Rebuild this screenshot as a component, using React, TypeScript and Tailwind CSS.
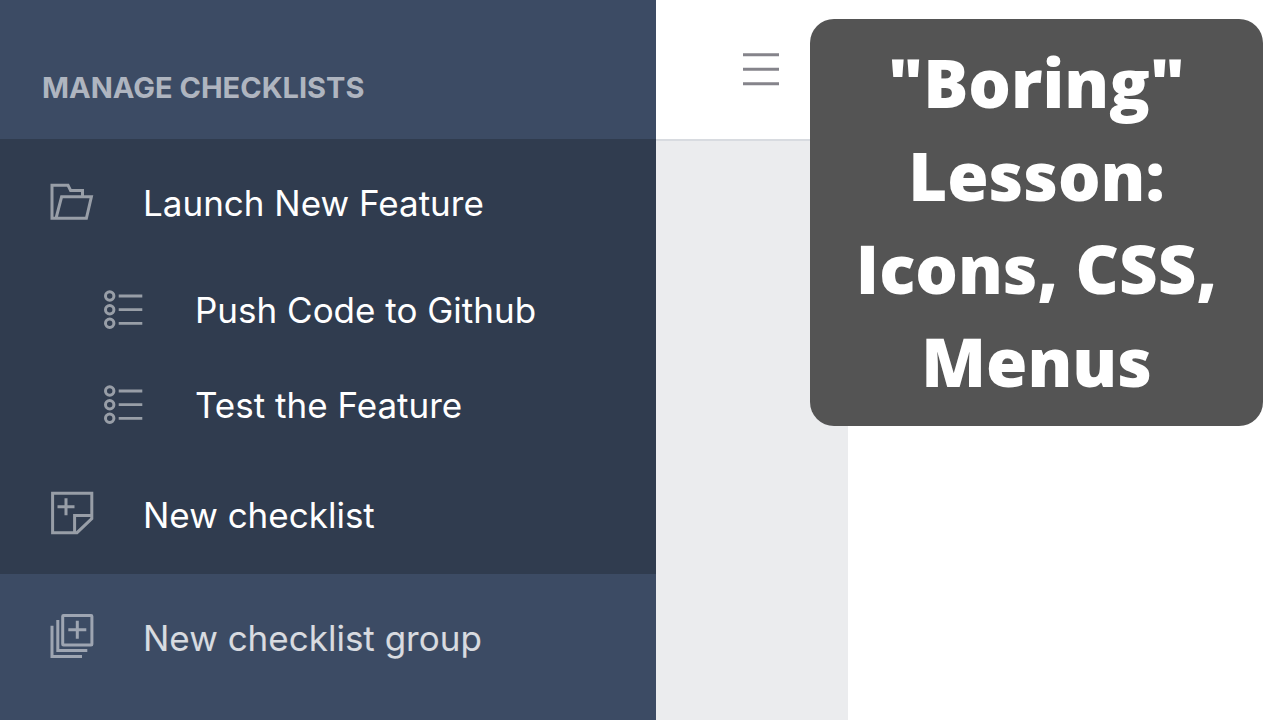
import React from 'react';
import { clsx } from 'clsx';

interface IconProps {
    className?: string;
    children: React.ReactNode;
}

function Icon({ className, children }: IconProps) {
    return (
        <svg
            viewBox="0 0 48 48"
            className={clsx('h-12 w-12 shrink-0 overflow-visible', className)}
            fill="none"
            stroke="currentColor"
            strokeWidth="3"
            aria-hidden="true"
        >
            {children}
        </svg>
    );
}

function FolderOpenIcon() {
    return (
        <Icon className="text-white opacity-50">
            <path d="M34.5 18v-6.6H22.6L20 6.3H4v33h34.4l5-21.5H13.6L8 39.3" />
        </Icon>
    );
}

function ListIcon() {
    return (
        <Icon className="text-white opacity-50">
            <circle cx="9.7" cy="9" r="4.2" />
            <circle cx="9.7" cy="22.7" r="4.2" />
            <circle cx="9.7" cy="36.3" r="4.2" />
            <path d="M18.7 9h23.6M18.7 22.7h23.6M18.7 36.3h23.6" strokeWidth="2.8" />
        </Icon>
    );
}

function NoteAddIcon() {
    return (
        <Icon className="text-white opacity-50">
            <path d="M4.6 2.2H43.8v25.4L29 41.7H4.6Z" />
            <path d="M44 24.5H26.6v17.2M18 7.2v17M9.5 15.7h17" />
        </Icon>
    );
}

function LibraryAddIcon() {
    return (
        <Icon className="text-white opacity-50">
            <rect x="14.7" y="1.5" width="29.2" height="29.5" rx="0.8" />
            <path d="M29.3 6.8v18M20.3 15.8h18" />
            <path d="M9.8 6V36.5h29.5M4 11.8V42.5h30" />
        </Icon>
    );
}

interface NavItemProps {
    label: string;
    icon: React.ReactNode;
    nested?: boolean;
    muted?: boolean;
}

function NavItem({ label, icon, nested, muted }: NavItemProps) {
    return (
        <li>
            <a
                href="#"
                className={clsx(
                    'flex items-center gap-[47px] pr-6 text-[35px] hover:bg-white/5',
                    nested ? 'h-[95px] pl-[100px]' : 'h-24 pl-12',
                    muted ? 'text-white/80' : 'text-white'
                )}
            >
                {icon}
                <span>{label}</span>
            </a>
        </li>
    );
}

const checklists = ['Push Code to Github', 'Test the Feature'];

function Sidebar() {
    return (
        <nav aria-label="Manage checklists" className="w-[51.25%] shrink-0 bg-[#3c4b64]">
            <h2 className="px-[42px] pt-[71px] pb-[34px] text-[29px] leading-[34px] font-bold text-white/60">
                MANAGE CHECKLISTS
            </h2>
            <ul className="bg-[#303c4f] pt-4 pb-[11px]">
                <NavItem label="Launch New Feature" icon={<FolderOpenIcon />} />
                <li>
                    <ul className="pt-3 pb-3.5">
                        {checklists.map((name) => (
                            <NavItem key={name} label={name} icon={<ListIcon />} nested />
                        ))}
                    </ul>
                </li>
                <NavItem label="New checklist" icon={<NoteAddIcon />} />
            </ul>
            <ul className="py-4">
                <NavItem label="New checklist group" icon={<LibraryAddIcon />} muted />
            </ul>
        </nav>
    );
}

export default function App() {
    return (
        <div className="relative flex min-h-screen overflow-hidden bg-white font-['Inter',sans-serif]">
            <Sidebar />

            <main className="flex w-[15%] flex-col bg-[#ebecee]">
                <header className="flex h-[141px] justify-end border-b-2 border-[#d8dbe0] bg-white pt-[45px] pr-[63px]">
                    <button type="button" aria-label="Toggle menu" className="h-12 w-12 text-[#85848b]">
                        <Icon>
                            <path d="M6 9.7h36M6 24.3h36M6 38.7h36" />
                        </Icon>
                    </button>
                </header>
            </main>

            {/* Lesson title, floats over the page */}
            <div className="absolute top-[19px] right-[17px] w-[453px] rounded-3xl bg-[#545454] px-8 pt-[17px] pb-[18px] text-center">
                <h1 className="font-['Open_Sans',sans-serif] text-[67px] leading-[93px] font-extrabold text-white">
                    "Boring" Lesson: Icons, CSS, Menus
                </h1>
            </div>
        </div>
    );
}
